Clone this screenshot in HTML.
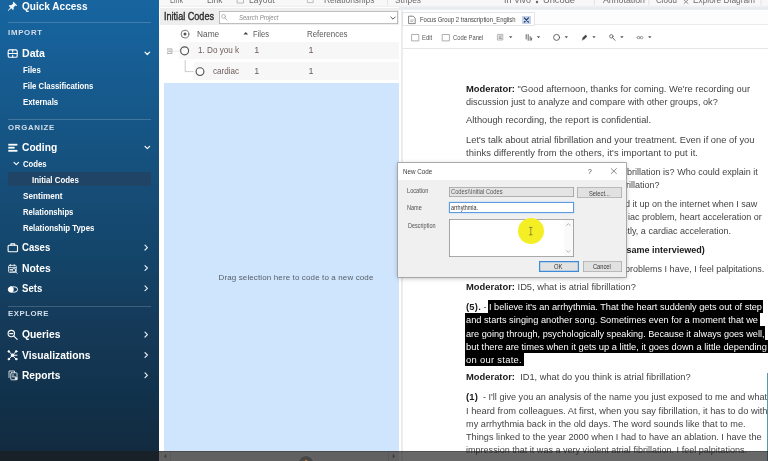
<!DOCTYPE html>
<html><head><meta charset="utf-8"><title>NVivo</title>
<style>
html,body{margin:0;padding:0;}
body{width:768px;height:461px;overflow:hidden;background:#fff;font-family:"Liberation Sans",sans-serif;}
#root{position:relative;width:768px;height:461px;overflow:hidden;background:#fff;}
.a{position:absolute;}
.t{position:absolute;white-space:pre;z-index:2;transform-origin:0 50%;filter:blur(0.35px);}
.dz{z-index:12;}
svg{position:absolute;overflow:visible;}
#side{left:0;top:0;width:158.8px;height:461px;background:linear-gradient(180deg,#17649f 0%,#16619a 8%,#175d93 14%,#155584 29%,#164c76 42.5%,#134468 57%,#153a59 70%,#11314a 87%,#122b40 97%,#122a3e 100%);}
.div{position:absolute;left:8px;width:143px;height:1px;background:rgba(255,255,255,0.18);}
#ribbon{left:159px;top:0;width:609px;height:7.8px;background:linear-gradient(180deg,#f8f8f8 0,#f8f8f8 5.4px,#f1f1f1 5.6px,#f1f1f1 100%);}
#mid{left:159px;top:7px;width:240px;height:454px;background:#fff;}
#gap{left:401.3px;top:7px;width:1.7px;height:454px;background:#ececec;}
#right{left:404px;top:7px;width:364px;height:454px;background:#fff;}
#drop{left:164px;top:83px;width:235px;height:378px;background:#cfe5fd;}
.hl{position:absolute;background:#000;z-index:1;}
#dlg{left:397.8px;top:163.2px;width:228px;height:114.2px;background:#f0f0f0;z-index:10;box-shadow:0 0 0 0.8px #9c9c9c,0 1px 5px rgba(0,0,0,0.3);}
#overlay{left:0;top:450.7px;width:768px;height:11px;background:rgba(30,30,30,0.67);z-index:30;}
svg.soft{filter:blur(0.3px);}

</style></head>
<body>
<div id="root">
<div id="side" class="a"></div>
<div class="div" style="top:22px"></div>
<div class="div" style="top:119px"></div>
<div class="div" style="top:305.5px"></div>
<div class="a" style="left:8px;top:172.1px;width:143px;height:13.6px;background:#204466;"></div>

<!-- sidebar icons -->
<svg class="a soft" style="left:0;top:0;z-index:3" width="159" height="461" viewBox="0 0 159 461" fill="none" stroke="#fff" stroke-width="1.1" stroke-linecap="round" stroke-linejoin="round">
 <!-- pin -->
 <g stroke="none" fill="#fff" opacity="0.95">
  <path d="M13.6 1.8 L17.2 5.4 L16.2 6.0 L15.3 5.6 L13.6 7.6 L13.7 9.4 L12.9 9.9 L11.3 8.3 L8.1 10.9 L7.8 10.6 L10.4 7.4 L8.9 5.9 L9.4 5.1 L11.2 5.2 L13.2 3.5 L12.8 2.6 Z"/>
 </g>
 <!-- data -->
 <rect x="8.2" y="49.9" width="9" height="7.3" rx="1.3"/>
 <path d="M8.2 53.5 H17.2 M12.7 50 V52 M12.7 55.2 V57.2"/>
 <!-- coding -->
 <g stroke="none" fill="#fff"><rect x="8.3" y="143.8" width="9.1" height="1.8"/><rect x="8.3" y="146.8" width="6.3" height="1.8"/><rect x="8.3" y="149.9" width="9.1" height="1.8"/></g>
 <!-- chevrons down -->
 <path d="M145 52.2 L147.3 54.5 L149.6 52.2" stroke-width="1.2"/>
 <path d="M145 146.3 L147.3 148.6 L149.6 146.3" stroke-width="1.2"/>
 <path d="M14 162.3 L16.3 164.6 L18.6 162.3" stroke-width="1.1"/>
 <!-- chevrons right -->
 <g stroke-width="1.2" stroke="#e6edf5">
 <path d="M145 245.2 L147.4 247.6 L145 250"/>
 <path d="M145 265.6 L147.4 268 L145 270.4"/>
 <path d="M145 285.9 L147.4 288.3 L145 290.7"/>
 <path d="M145 332.2 L147.4 334.6 L145 337"/>
 <path d="M145 352.6 L147.4 355 L145 357.4"/>
 <path d="M145 372.9 L147.4 375.3 L145 377.7"/>
 </g>
 <!-- cases -->
 <rect x="8.1" y="245.3" width="9.4" height="6.4" rx="1"/>
 <path d="M10.9 245.2 V243.9 H14.7 V245.2"/>
 <!-- notes -->
 <g stroke-width="0.9" opacity="0.9">
 <rect x="8.6" y="265.4" width="7.6" height="7" rx="0.8"/>
 <path d="M8.6 267.6 H16.2 M10.6 264.5 V266 M14.2 264.5 V266 M10 269.5 H12 M10 271 H11.5"/>
 <circle cx="14" cy="270.2" r="1.7"/><path d="M15.3 271.5 L17.3 273.4"/>
 </g>
 <!-- sets -->
 <g><rect x="8.3" y="286.9" width="9.2" height="5.2" rx="2.6" stroke-width="1"/><circle cx="11" cy="289.5" r="2.7" fill="#fff" stroke="none"/></g>
 <!-- queries -->
 <circle cx="11.3" cy="333.6" r="3.2"/><path d="M13.8 336.1 L17.2 339.4 M9.8 333.6 H12.8" />
 <!-- visualizations -->
 <g stroke-width="1">
 <circle cx="12.5" cy="355.2" r="1.3" fill="#fff"/>
 <path d="M12.5 355.2 L9 351.6 M12.5 355.2 L16 351.6 M12.5 355.2 L9 359 M12.5 355.2 L16 359 M12.5 355.2 H17"/>
 <circle cx="8.8" cy="351.4" r="0.8" fill="#fff"/><circle cx="16.2" cy="351.4" r="0.8" fill="#fff"/><circle cx="8.8" cy="359.1" r="0.8" fill="#fff"/><circle cx="16.2" cy="359.1" r="0.8" fill="#fff"/>
 </g>
 <!-- reports -->
 <g stroke-width="0.9" opacity="0.9">
 <path d="M9 377.5 V371 H14.5 V372.6"/>
 <rect x="10.8" y="372.8" width="6.2" height="7" rx="0.6"/>
 <path d="M12.3 375 H13.8 M12.3 376.8 H15.4"/>
 <rect x="14.8" y="377.2" width="2.6" height="2.6" fill="#fff" stroke="none"/>
 </g>
</svg>
<div id="ribbon" class="a"></div>
<div id="mid" class="a"></div>
<div id="gap" class="a"></div>
<div id="right" class="a"></div>
<div id="drop" class="a"></div>
<!-- mid header -->
<div class="a" style="left:160px;top:7.8px;width:239px;height:17.4px;background:#eeeeee;"></div>
<div class="a" style="left:218.8px;top:11px;width:179.2px;height:13px;background:#fff;box-shadow:0 0 0 0.8px #ababab inset;"></div>
<!-- rows -->
<div class="a" style="left:178.8px;top:42px;width:220.2px;height:17px;background:#f7f7f7;"></div>
<div class="a" style="left:194px;top:62.2px;width:205px;height:17.4px;background:#f7f7f7;"></div>
<svg class="a soft" style="left:0;top:0;z-index:3" width="768" height="100" viewBox="0 0 768 100" fill="none" stroke="#5a5a5a" stroke-width="1" stroke-linecap="round" stroke-linejoin="round">
 <!-- ribbon fragments -->
 <rect x="237.5" y="-2" width="6" height="5" stroke="#aaa" stroke-width="0.8"/>
 <rect x="307.8" y="-3" width="5.4" height="5.6" stroke="#b0b0b0" stroke-width="0.8"/>
 <path d="M387.5 -2 V5 M594.4 -2 V5 M648.8 -2 V5 M761 -2 V5" stroke="#dedede" stroke-width="0.8"/>
 <circle cx="537" cy="2" r="1.2" fill="#666" stroke="none"/>
 <path d="M684 0 L688 3.5 M688 0 L684 3.5" stroke="#777" stroke-width="0.8"/>
 <!-- search magnifier + chevron -->
 <circle cx="223.6" cy="16.4" r="1.9" stroke="#a8a8a8" stroke-width="0.8"/>
 <path d="M225 17.9 L227 20.1" stroke="#a8a8a8" stroke-width="0.9"/>
 <path d="M390.8 17 L393 19.2 L395.2 17" stroke="#555" stroke-width="1"/>
 <!-- header icon -->
 <circle cx="185" cy="34.1" r="3.9" stroke="#666" stroke-width="0.9"/>
 <circle cx="185" cy="34.1" r="1.5" fill="#555" stroke="none"/>
 <!-- sort arrow -->
 <path d="M243.4 34.6 L245.8 31.9 L248.2 34.6 Z" fill="#444" stroke="none"/>
 <!-- expand box -->
 <rect x="167.4" y="48.9" width="4.6" height="4.6" stroke="#a5a5a5" stroke-width="0.8" fill="#f4f4f4"/>
 <path d="M168.6 51.2 H170.8" stroke="#888" stroke-width="0.7"/>
 <path d="M173 51.2 H179" stroke="#d8d8d8" stroke-width="0.7" stroke-dasharray="0.8 1"/>
 <!-- tree circles -->
 <circle cx="184.6" cy="50.8" r="4" stroke="#555" stroke-width="1.15" fill="#fbfbfb"/>
 <circle cx="200" cy="71.6" r="3.9" stroke="#555" stroke-width="1.15" fill="#fbfbfb"/>
 <path d="M185.2 60.4 V71.6 H193.6" stroke="#b5b5b5" stroke-width="0.8" stroke-dasharray="1 1"/>
 <!-- doc icon in tab -->
 <path d="M409 16.2 H413.2 L415.2 18.2 V23.6 H409 Z" stroke="#666" stroke-width="0.8" fill="#fff"/>
 <path d="M410.6 20 H413.6 M410.6 21.6 H412.6" stroke="#888" stroke-width="0.6"/>
 <!-- tab close x -->
 <path d="M524.3 17.9 L528.5 22.1 M528.5 17.9 L524.3 22.1" stroke="#1d3a72" stroke-width="1.2"/>
 <!-- toolbar checkboxes -->
 <rect x="412" y="34.5" width="6.8" height="6.4" stroke="#9a9a9a" stroke-width="0.8" fill="#fff"/>
 <rect x="442.6" y="34.5" width="6.8" height="6.4" stroke="#9a9a9a" stroke-width="0.8" fill="#fff"/>
 <!-- toolbar icons -->
 <g stroke="#777" stroke-width="0.7">
  <rect x="497.8" y="34.4" width="5" height="5.6" stroke="#999"/>
  <path d="M499 36 H501.8 M499 37.3 H501 M499 38.6 H501.8"/>
  <path d="M526.2 34.6 V39 M528.2 34.6 V40.3 M530.2 36.6 V40.3 M531.6 38 V40" stroke="#555" stroke-width="0.9"/>
  <circle cx="556.6" cy="37.4" r="3" stroke="#555" stroke-width="0.9"/>
  <path d="M582.3 39.8 L583 37.6 L585.6 35 L587 36.4 L584.4 39 Z" fill="#444" stroke="#444" stroke-width="0.5"/>
  <circle cx="611.3" cy="36.3" r="1.7" stroke="#666" stroke-width="0.9"/>
  <path d="M612.5 37.6 L615 40.3" stroke="#666" stroke-width="1"/>
  <path d="M637 37.6 a1.5 1.2 0 1 0 3 0 a1.5 1.2 0 1 0 -3 0 M640 37.6 a1.5 1.2 0 1 0 3 0 a1.5 1.2 0 1 0 -3 0" stroke="#777" stroke-width="0.7"/>
 </g>
 <g fill="#555" stroke="none">
  <path d="M509 36.2 H512.4 L510.7 38.2 Z"/>
  <path d="M536.8 36.2 H540.2 L538.5 38.2 Z"/>
  <path d="M564.6 36.2 H568 L566.3 38.2 Z"/>
  <path d="M592.3 36.2 H595.7 L594 38.2 Z"/>
  <path d="M620.2 36.2 H623.6 L621.9 38.2 Z"/>
  <path d="M648.1 36.2 H651.5 L649.8 38.2 Z"/>
 </g>
</svg>
<!-- right tabs -->
<div class="a" style="left:399px;top:5.5px;width:369px;height:4.7px;background:linear-gradient(180deg,#f1f2f3 0%,#e8ebee 45%,#e8ebee 80%,#f2f3f5 100%);"></div>
<div class="a" style="left:403px;top:10.2px;width:365px;height:14.8px;background:#fdfdfd;"></div>
<div class="a" style="left:403px;top:24.3px;width:365px;height:0.9px;background:#ebebeb;"></div>
<div class="a" style="left:403px;top:12.6px;width:130.5px;height:12.8px;background:#fff;box-shadow:0 0 0 0.7px #dadada;"></div>
<div class="a" style="left:403px;top:47.8px;width:365px;height:0.9px;background:#e6e6e6;"></div>
<div class="a" style="left:521.9px;top:16.3px;width:9px;height:7.5px;background:#c6d4e7;"></div>
<!-- highlights -->
<div class="hl" style="left:488px;top:299.6px;width:275px;height:13.6px;"></div>
<div class="hl" style="left:465px;top:313px;width:295px;height:13.4px;"></div>
<div class="hl" style="left:465px;top:326.3px;width:300px;height:13.4px;"></div>
<div class="hl" style="left:465px;top:339.6px;width:303px;height:13.4px;"></div>
<div class="hl" style="left:465px;top:352.9px;width:58.5px;height:13px;"></div>
<div class="a" style="left:766.5px;top:373px;width:1.5px;height:88px;background:#5a9aa8;"></div>
<!-- dialog -->
<div id="dlg" class="a">
 <div class="a" style="left:0;top:0;width:228px;height:16.4px;background:#fff;"></div>
 <div class="a" style="left:51.7px;top:23.5px;width:124.2px;height:10.8px;background:#e4e4e4;box-shadow:0 0 0 0.8px #9e9e9e inset;"></div>
 <div class="a" style="left:179.4px;top:24.2px;width:44.8px;height:11px;background:#e1e1e1;box-shadow:0 0 0 0.8px #adadad inset;"></div>
 <div class="a" style="left:51.2px;top:38.5px;width:124.7px;height:11.3px;background:#fff;box-shadow:0 0 0 1px #5b9ce2 inset,0 0 1.5px #9cc4f0;"></div>
 <div class="a" style="left:51.4px;top:56.2px;width:124.5px;height:37.6px;background:#fff;box-shadow:0 0 0 0.8px #8f8f8f inset;"></div>
 <div class="a" style="left:165.8px;top:57px;width:9.3px;height:36px;background:#fafafa;"></div>
 <div class="a" style="left:141.2px;top:97.4px;width:39.7px;height:11.2px;background:#e2e2e2;box-shadow:0 0 0 1.2px #3c8ad8 inset;"></div>
 <div class="a" style="left:185.2px;top:97.4px;width:38.7px;height:11.2px;background:#e1e1e1;box-shadow:0 0 0 0.8px #adadad inset;"></div>
 <div class="a" style="left:119.8px;top:54.5px;width:26px;height:26px;border-radius:50%;background:#f4ef25;"></div>
 <svg class="a" style="left:0;top:0" width="228" height="114" viewBox="0 0 228 114" fill="none" stroke="#666" stroke-width="0.7" stroke-linecap="round">
  <path d="M213.2 5.6 L218.4 10.6 M218.4 5.6 L213.2 10.6" stroke="#555" stroke-width="0.7"/>
  <path d="M168.6 62.4 L170.4 60.6 L172.2 62.4" stroke="#999"/>
  <path d="M168.6 87.6 L170.4 89.4 L172.2 87.6" stroke="#999"/>
  <path d="M131.4 64.4 H134.2 M132.8 64.4 V71.8 M131.4 71.8 H134.2" stroke="#7d7a28" stroke-width="0.8"/>
 </svg>
</div>
<span class="t " style="left:21.50px;top:0.92px;font-size:11.2px;line-height:11.2px;color:#ffffff;font-weight:bold;transform:scaleX(0.8975);">Quick Access</span>
<span class="t " style="left:8.00px;top:29.20px;font-size:7.8px;line-height:7.8px;color:#d3deea;font-weight:bold;letter-spacing:0.745px;">IMPORT</span>
<span class="t " style="left:22.00px;top:48.22px;font-size:11.2px;line-height:11.2px;color:#ffffff;font-weight:bold;transform:scaleX(0.9485);">Data</span>
<span class="t " style="left:22.60px;top:65.70px;font-size:8.5px;line-height:8.5px;color:#ffffff;font-weight:bold;transform:scaleX(0.9135);">Files</span>
<span class="t " style="left:22.60px;top:81.70px;font-size:8.5px;line-height:8.5px;color:#ffffff;font-weight:bold;transform:scaleX(0.9143);">File Classifications</span>
<span class="t " style="left:22.60px;top:97.60px;font-size:8.5px;line-height:8.5px;color:#ffffff;font-weight:bold;transform:scaleX(0.9195);">Externals</span>
<span class="t " style="left:8.00px;top:123.60px;font-size:7.8px;line-height:7.8px;color:#d3deea;font-weight:bold;letter-spacing:0.730px;">ORGANIZE</span>
<span class="t " style="left:21.50px;top:142.32px;font-size:11.2px;line-height:11.2px;color:#ffffff;font-weight:bold;transform:scaleX(0.9135);">Coding</span>
<span class="t " style="left:22.60px;top:159.80px;font-size:8.5px;line-height:8.5px;color:#ffffff;font-weight:bold;transform:scaleX(0.9082);">Codes</span>
<span class="t " style="left:32.20px;top:175.70px;font-size:8.5px;line-height:8.5px;color:#ffffff;font-weight:bold;transform:scaleX(0.9259);">Initial Codes</span>
<span class="t " style="left:22.60px;top:191.50px;font-size:8.5px;line-height:8.5px;color:#ffffff;font-weight:bold;transform:scaleX(0.9588);">Sentiment</span>
<span class="t " style="left:22.60px;top:207.50px;font-size:8.5px;line-height:8.5px;color:#ffffff;font-weight:bold;transform:scaleX(0.9043);">Relationships</span>
<span class="t " style="left:22.60px;top:223.50px;font-size:8.5px;line-height:8.5px;color:#ffffff;font-weight:bold;transform:scaleX(0.9235);">Relationship Types</span>
<span class="t " style="left:21.50px;top:242.42px;font-size:11.2px;line-height:11.2px;color:#ffffff;font-weight:bold;transform:scaleX(0.8554);">Cases</span>
<span class="t " style="left:22.20px;top:263.22px;font-size:11.2px;line-height:11.2px;color:#ffffff;font-weight:bold;transform:scaleX(0.9262);">Notes</span>
<span class="t " style="left:21.50px;top:283.22px;font-size:11.2px;line-height:11.2px;color:#ffffff;font-weight:bold;transform:scaleX(0.8545);">Sets</span>
<span class="t " style="left:8.00px;top:310.40px;font-size:7.8px;line-height:7.8px;color:#d3deea;font-weight:bold;letter-spacing:0.533px;">EXPLORE</span>
<span class="t " style="left:21.50px;top:329.42px;font-size:11.2px;line-height:11.2px;color:#ffffff;font-weight:bold;transform:scaleX(0.9239);">Queries</span>
<span class="t " style="left:21.50px;top:349.82px;font-size:11.2px;line-height:11.2px;color:#ffffff;font-weight:bold;transform:scaleX(0.9206);">Visualizations</span>
<span class="t " style="left:22.00px;top:370.02px;font-size:11.2px;line-height:11.2px;color:#ffffff;font-weight:bold;transform:scaleX(0.9082);">Reports</span>
<span class="t " style="left:169.50px;top:-5.34px;font-size:9.5px;line-height:9.5px;color:#6c6c6c;transform:scaleX(0.7455);">Link</span>
<span class="t " style="left:206.50px;top:-5.34px;font-size:9.5px;line-height:9.5px;color:#6c6c6c;transform:scaleX(0.8889);">Link</span>
<span class="t " style="left:249.00px;top:-5.34px;font-size:9.5px;line-height:9.5px;color:#6c6c6c;transform:scaleX(0.8938);">Layout</span>
<span class="t " style="left:324.00px;top:-5.34px;font-size:9.5px;line-height:9.5px;color:#6c6c6c;transform:scaleX(0.8852);">Relationships</span>
<span class="t " style="left:394.50px;top:-5.34px;font-size:9.5px;line-height:9.5px;color:#6c6c6c;transform:scaleX(0.8790);">Stripes</span>
<span class="t " style="left:503.50px;top:-5.34px;font-size:9.5px;line-height:9.5px;color:#6c6c6c;transform:scaleX(0.9351);">In Vivo</span>
<span class="t " style="left:542.50px;top:-5.34px;font-size:9.5px;line-height:9.5px;color:#6c6c6c;transform:scaleX(0.9771);">Uncode</span>
<span class="t " style="left:602.50px;top:-5.34px;font-size:9.5px;line-height:9.5px;color:#6c6c6c;transform:scaleX(0.9243);">Annotation</span>
<span class="t " style="left:656.00px;top:-5.34px;font-size:9.5px;line-height:9.5px;color:#6c6c6c;transform:scaleX(0.8458);">Cloud</span>
<span class="t " style="left:693.00px;top:-5.34px;font-size:9.5px;line-height:9.5px;color:#6c6c6c;transform:scaleX(0.8763);">Explore Diagram</span>
<span class="t " style="left:163.80px;top:11.84px;font-size:10px;line-height:10px;color:#2b2b2b;transform:scaleX(0.9086);-webkit-text-stroke:0.35px #2b2b2b;">Initial Codes</span>
<span class="t " style="left:238.50px;top:13.91px;font-size:7.2px;line-height:7.2px;color:#8a8a8a;font-style:italic;transform:scaleX(0.8337);">Search Project</span>
<span class="t " style="left:196.80px;top:29.78px;font-size:9px;line-height:9px;color:#5a5a5a;transform:scaleX(0.9244);">Name</span>
<span class="t " style="left:252.80px;top:29.78px;font-size:9px;line-height:9px;color:#5a5a5a;transform:scaleX(0.8414);">Files</span>
<span class="t " style="left:307.00px;top:29.78px;font-size:9px;line-height:9px;color:#5a5a5a;transform:scaleX(0.8798);">References</span>
<span class="t " style="left:198.20px;top:45.58px;font-size:9px;line-height:9px;color:#6e5c5c;transform:scaleX(0.9049);">1. Do you k</span>
<span class="t " style="left:254.20px;top:45.58px;font-size:9px;line-height:9px;color:#6e5c5c;">1</span>
<span class="t " style="left:308.50px;top:45.58px;font-size:9px;line-height:9px;color:#6e5c5c;">1</span>
<span class="t " style="left:212.80px;top:66.98px;font-size:9px;line-height:9px;color:#6e5c5c;transform:scaleX(0.8995);">cardiac</span>
<span class="t " style="left:254.20px;top:66.98px;font-size:9px;line-height:9px;color:#6e5c5c;">1</span>
<span class="t " style="left:308.50px;top:66.98px;font-size:9px;line-height:9px;color:#6e5c5c;">1</span>
<span class="t " style="left:218.50px;top:274.33px;font-size:8px;line-height:8px;color:#555e68;letter-spacing:0.125px;">Drag selection here to code to a new code</span>
<span class="t " style="left:419.70px;top:15.81px;font-size:7.2px;line-height:7.2px;color:#444;transform:scaleX(0.8223);">Focus Group 2 transcription_English</span>
<span class="t " style="left:422.10px;top:34.84px;font-size:6.8px;line-height:6.8px;color:#555;transform:scaleX(0.8704);">Edit</span>
<span class="t " style="left:452.50px;top:34.84px;font-size:6.8px;line-height:6.8px;color:#555;transform:scaleX(0.8556);">Code Panel</span>
<span class="t " style="left:466.00px;top:84.04px;font-size:9.4px;line-height:9.4px;color:#1a1a1a;font-weight:bold;">Moderator:</span>
<span class="t " style="left:515.00px;top:84.04px;font-size:9.4px;line-height:9.4px;color:#444444;transform:scaleX(0.9901);"> &quot;Good afternoon, thanks for coming. We&#x27;re recording our</span>
<span class="t " style="left:466.00px;top:97.44px;font-size:9.4px;line-height:9.4px;color:#444444;transform:scaleX(0.9738);">discussion just to analyze and compare with other groups, ok?</span>
<span class="t " style="left:466.00px;top:115.34px;font-size:9.4px;line-height:9.4px;color:#444444;transform:scaleX(0.9943);">Although recording, the report is confidential.</span>
<span class="t " style="left:466.00px;top:135.24px;font-size:9.4px;line-height:9.4px;color:#444444;transform:scaleX(0.9967);">Let&#x27;s talk about atrial fibrillation and your treatment. Even if one of you</span>
<span class="t " style="left:466.00px;top:147.84px;font-size:9.4px;line-height:9.4px;color:#444444;letter-spacing:0.078px;">thinks differently from the others, it&#x27;s important to put it.</span>
<span class="t " style="left:627.15px;top:166.94px;font-size:9.4px;line-height:9.4px;color:#444444;transform:scaleX(0.9620);">brillation is? Who could explain it</span>
<span class="t " style="left:621.38px;top:180.44px;font-size:9.4px;line-height:9.4px;color:#444444;transform:scaleX(0.9620);">brillation?</span>
<span class="t " style="left:625.13px;top:199.04px;font-size:9.4px;line-height:9.4px;color:#444444;transform:scaleX(0.9620);">d it up on the internet when I saw</span>
<span class="t " style="left:627.85px;top:212.14px;font-size:9.4px;line-height:9.4px;color:#444444;transform:scaleX(0.9620);">iac problem, heart acceleration or</span>
<span class="t " style="left:623.18px;top:225.64px;font-size:9.4px;line-height:9.4px;color:#444444;transform:scaleX(0.9620);">ctly, a cardiac acceleration.</span>
<span class="t " style="left:618.78px;top:244.64px;font-size:9.4px;line-height:9.4px;color:#1a1a1a;font-weight:bold;transform:scaleX(0.9620);">e same interviewed)</span>
<span class="t " style="left:624.93px;top:263.64px;font-size:9.4px;line-height:9.4px;color:#444444;transform:scaleX(0.9620);">problems I have, I feel palpitations.</span>
<span class="t " style="left:466.00px;top:282.04px;font-size:9.4px;line-height:9.4px;color:#1a1a1a;font-weight:bold;">Moderator:</span>
<span class="t " style="left:515.00px;top:282.04px;font-size:9.4px;line-height:9.4px;color:#444444;transform:scaleX(0.9907);"> ID5, what is atrial fibrillation?</span>
<span class="t " style="left:466.00px;top:302.04px;font-size:9.4px;line-height:9.4px;color:#1a1a1a;font-weight:bold;letter-spacing:0.234px;">(5).</span>
<span class="t " style="left:481.00px;top:302.04px;font-size:9.4px;line-height:9.4px;color:#444444;transform:scaleX(0.9588);"> - </span>
<span class="t " style="left:489.00px;top:302.04px;font-size:9.4px;line-height:9.4px;color:#fff;transform:scaleX(0.9789);">I believe it&#x27;s an arrhythmia. That the heart suddenly gets out of step</span>
<span class="t " style="left:466.00px;top:315.34px;font-size:9.4px;line-height:9.4px;color:#fff;transform:scaleX(0.9848);">and starts singing another song. Sometimes even for a moment that we</span>
<span class="t " style="left:466.00px;top:328.64px;font-size:9.4px;line-height:9.4px;color:#fff;transform:scaleX(0.9741);">are going through, psychologically speaking. Because it always goes well,</span>
<span class="t " style="left:466.00px;top:341.94px;font-size:9.4px;line-height:9.4px;color:#fff;transform:scaleX(0.9958);">but there are times when it gets up a little, it goes down a little depending</span>
<span class="t " style="left:466.00px;top:355.24px;font-size:9.4px;line-height:9.4px;color:#fff;letter-spacing:0.298px;">on our state.</span>
<span class="t " style="left:466.00px;top:372.44px;font-size:9.4px;line-height:9.4px;color:#1a1a1a;font-weight:bold;">Moderator:</span>
<span class="t " style="left:515.00px;top:372.44px;font-size:9.4px;line-height:9.4px;color:#444444;transform:scaleX(0.9887);">  ID1, what do you think is atrial fibrillation?</span>
<span class="t " style="left:466.00px;top:391.84px;font-size:9.4px;line-height:9.4px;color:#1a1a1a;font-weight:bold;letter-spacing:0.177px;">(1)</span>
<span class="t " style="left:478.00px;top:391.84px;font-size:9.4px;line-height:9.4px;color:#444444;transform:scaleX(0.9688);">  - I&#x27;ll give you an analysis of the name you just exposed to me and what</span>
<span class="t " style="left:466.00px;top:406.04px;font-size:9.4px;line-height:9.4px;color:#444444;transform:scaleX(0.9907);">I heard from colleagues. At first, when you say fibrillation, it has to do with</span>
<span class="t " style="left:466.00px;top:419.24px;font-size:9.4px;line-height:9.4px;color:#444444;transform:scaleX(0.9797);">my arrhythmia back in the old days. The word sounds like that to me.</span>
<span class="t " style="left:466.00px;top:432.24px;font-size:9.4px;line-height:9.4px;color:#444444;transform:scaleX(0.9778);">Things linked to the year 2000 when I had to have an ablation. I have the</span>
<span class="t " style="left:466.00px;top:445.24px;font-size:9.4px;line-height:9.4px;color:#444444;transform:scaleX(0.9647);">impression that it was a very violent atrial fibrillation. I feel palpitations.</span>
<span class="t dz" style="left:402.80px;top:167.94px;font-size:7.4px;line-height:7.4px;color:#3a3a3a;transform:scaleX(0.8460);">New Code</span>
<span class="t dz" style="left:587.60px;top:167.54px;font-size:7.4px;line-height:7.4px;color:#3a3a3a;transform:scaleX(0.9212);">?</span>
<span class="t dz" style="left:407.00px;top:186.77px;font-size:7px;line-height:7px;color:#505050;transform:scaleX(0.8047);">Location</span>
<span class="t dz" style="left:451.20px;top:188.37px;font-size:7px;line-height:7px;color:#5a5a5a;transform:scaleX(0.8235);">Codes\\Initial Codes</span>
<span class="t dz" style="left:588.80px;top:189.57px;font-size:7px;line-height:7px;color:#444;transform:scaleX(0.8262);">Select...</span>
<span class="t dz" style="left:407.00px;top:203.77px;font-size:7px;line-height:7px;color:#505050;transform:scaleX(0.7866);">Name</span>
<span class="t dz" style="left:450.70px;top:203.77px;font-size:7px;line-height:7px;color:#333;transform:scaleX(0.7739);">arrhythmia.</span>
<span class="t dz" style="left:407.80px;top:221.87px;font-size:7px;line-height:7px;color:#505050;transform:scaleX(0.7854);">Description</span>
<span class="t dz" style="left:554.30px;top:262.97px;font-size:7px;line-height:7px;color:#333;transform:scaleX(0.8395);">OK</span>
<span class="t dz" style="left:592.70px;top:262.97px;font-size:7px;line-height:7px;color:#333;transform:scaleX(0.8120);">Cancel</span>
<div class="a" style="left:159px;top:450.8px;width:240px;height:11px;background:#eaeaea;z-index:5;"></div>
<div class="a" style="left:170.2px;top:451px;width:0.8px;height:10px;background:#d2d2d2;z-index:6;"></div>
<div class="a" style="left:388.4px;top:451px;width:0.8px;height:10px;background:#d2d2d2;z-index:6;"></div>
<svg class="a" style="left:0;top:450px;z-index:6" width="768" height="11" viewBox="0 0 768 11">
 <path d="M166.2 3.8 L164.2 6.2 L166.2 8.6 Z M392.8 3.8 L394.8 6.2 L392.8 8.6 Z" fill="#6a6a6a"/>
</svg>
<div id="overlay" class="a"></div>
<div class="a" style="left:159px;top:450.6px;width:609px;height:1px;background:rgba(0,0,0,0.22);z-index:31;"></div>
<svg class="a" style="left:0;top:450px;z-index:32" width="768" height="11" viewBox="0 0 768 11">
 <circle cx="306" cy="13.2" r="7.6" fill="#474747" stroke="#6c6c6c" stroke-width="0.8"/>
 <path d="M304.6 11 L306 9.4 L307.4 11 Z" fill="#d07a28"/>
</svg>

</div>
</body></html>
